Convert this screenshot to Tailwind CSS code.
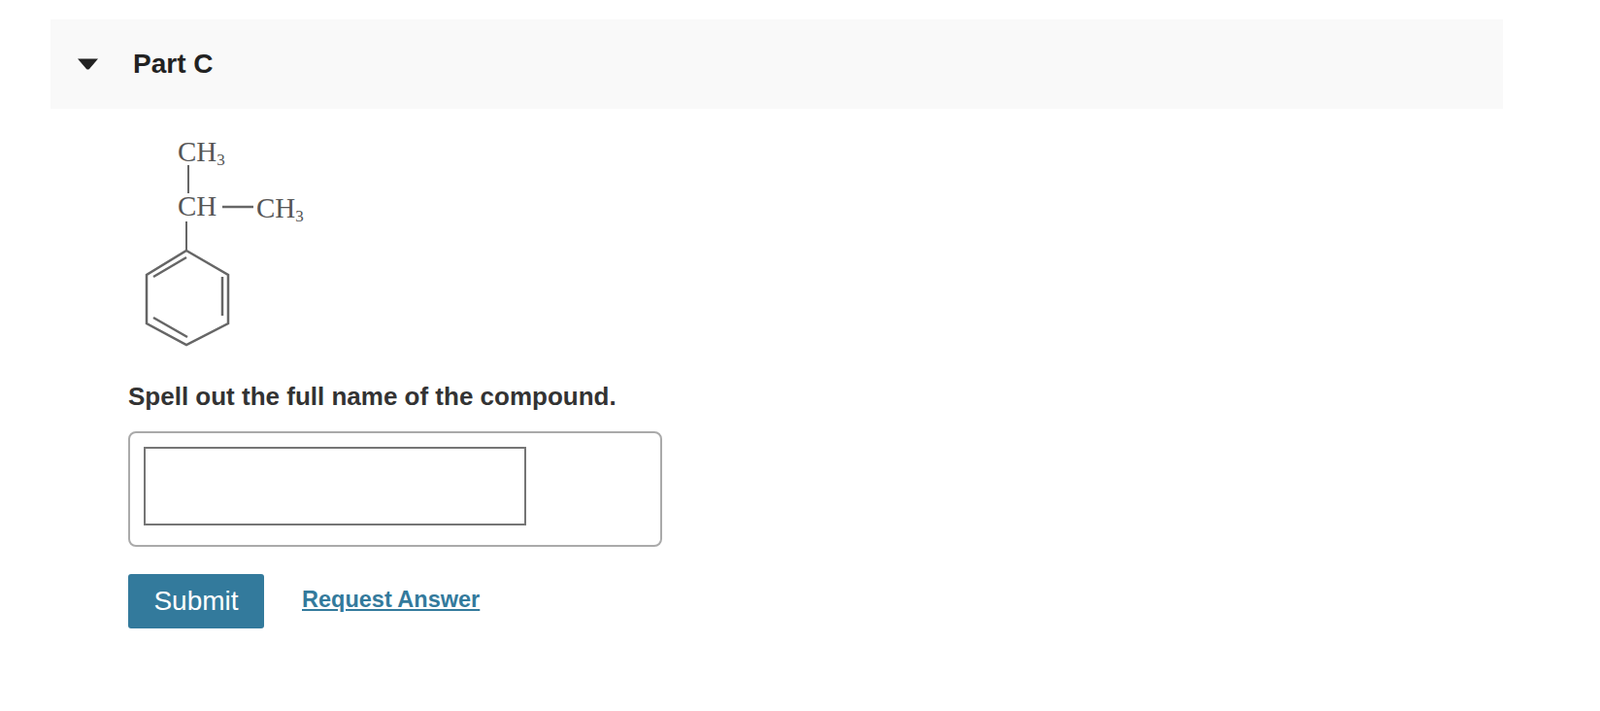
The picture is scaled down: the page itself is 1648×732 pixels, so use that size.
<!DOCTYPE html>
<html lang="en">
<head>
  <meta charset="UTF-8" />
  <title>Part C</title>
  <script src="https://cdn.jsdelivr.net/npm/@tailwindcss/browser@4"></script>
</head>
<body class="bg-white h-[732px] overflow-hidden font-['Liberation_Sans',Arial,sans-serif]">

  <!-- Part header -->
  <div class="ml-[52px] mt-[20px] w-[1496px] h-[92px] bg-[#f9f9f9] flex items-center">
    <svg class="ml-[28px] -mt-[1px] w-[21px] h-[12px]" viewBox="0 0 21 12"><path d="M0 0.5 H21 L12 11 Q10.5 12 9 11 Z" fill="#222"/></svg>
    <h2 class="ml-[36px] text-[28px] leading-none font-bold text-[#222]">Part C</h2>
  </div>

  <div class="ml-[132px] w-[550px]">
    <!-- Structure -->
    <svg class="block w-[200px] h-[235px]" viewBox="132 112 200 235" style="overflow:visible" fill="none">
      <g font-family="'Liberation Serif', serif" font-size="29" fill="#555">
        <text x="183" y="166">CH<tspan font-size="17" dy="4">3</tspan></text>
        <text x="183" y="222">CH</text>
        <text x="264" y="224">CH<tspan font-size="17" dy="4">3</tspan></text>
      </g>
      <g stroke="#666" stroke-width="2.5">
        <path d="M194 170 V199" stroke-width="2" />
        <path d="M229 213 H261" />
        <path d="M192 228 V258" stroke-width="2" />
        <path d="M192 258 L235 283 V333 L192 355 L151 333 V283 Z" />
        <path d="M158 285 L192 265" />
        <path d="M229 285 V325" />
        <path d="M158 327 L193 347" />
      </g>
    </svg>

    <p class="mt-[46px] text-[26px] leading-[30px] font-bold text-[#333]">Spell out the full name of the compound.</p>

    <!-- Answer box -->
    <div class="mt-[21px] h-[119px] border-2 border-[#aaa] rounded-[8px] pl-[14px] pt-[14px]">
      <input type="text" class="block w-[394px] h-[81px] border-2 border-[#757575] bg-white outline-none" />
    </div>

    <div class="mt-[28px] flex items-start">
      <button class="w-[140px] h-[56px] bg-[#337a9c] rounded-[3px] text-white text-[28px]">Submit</button>
      <a href="#" class="ml-[39px] mt-[12px] text-[23.5px] leading-[28px] font-bold text-[#337a9c] underline">Request Answer</a>
    </div>
  </div>
</body>
</html>
